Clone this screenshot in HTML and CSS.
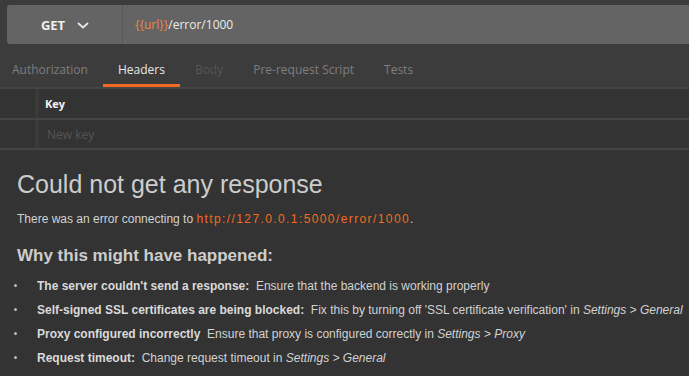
FILE: index.html
```html
<!DOCTYPE html>
<html lang="en">
<head>
    <meta charset="UTF-8">
    <meta name="viewport" content="width=device-width, initial-scale=1.0">
    <title>Could not get any response</title>
    <link rel="stylesheet" href="styles.css">
</head>
<body>
    <section class="request-section">
        <div class="request-bar">
            <div class="method">
                <span class="method-name">GET</span>
                <svg class="chevron" width="12" height="7" viewBox="0 0 12 7">
                    <polyline points="1,1 6,5.5 11,1" fill="none" stroke="#e6e6e6" stroke-width="1.8"/>
                </svg>
            </div>
            <div class="url"><span class="var">{{url}}</span>/error/1000</div>
        </div>

        <nav class="tabs">
            <span class="tab">Authorization</span>
            <span class="tab active">Headers</span>
            <span class="tab disabled">Body</span>
            <span class="tab">Pre-request Script</span>
            <span class="tab">Tests</span>
        </nav>
    </section>

    <section class="headers-table">
        <div class="row">
            <div class="cell-check"></div>
            <div class="cell-key head">Key</div>
        </div>
        <div class="row">
            <div class="cell-check"></div>
            <div class="cell-key placeholder">New key</div>
        </div>
    </section>

    <section class="response">
        <h1 class="error-title">Could not get any response</h1>
        <p class="error-text">There was an error connecting to <a href="#" class="error-link">http://127.0.0.1:5000/error/1000</a>.</p>

        <h2 class="why-title">Why this might have happened:</h2>
        <ul class="reasons">
            <li><strong>The server couldn't send a response:</strong>&nbsp; Ensure that the backend is working properly</li>
            <li><strong>Self-signed SSL certificates are being blocked:</strong>&nbsp; Fix this by turning off 'SSL certificate verification' in <em>Settings &gt; General</em></li>
            <li><strong>Proxy configured incorrectly</strong>&nbsp; Ensure that proxy is configured correctly in <em>Settings &gt; Proxy</em></li>
            <li><strong>Request timeout:</strong>&nbsp; Change request timeout in <em>Settings &gt; General</em></li>
        </ul>
    </section>
</body>
</html>
```

FILE: styles.css
```css
body, html {
    margin: 0;
    padding: 0;
    background: #333333;
    font-family: "Liberation Sans", Arial, sans-serif;
    height: 100%;
    overflow: hidden;
}

.request-section {
    background: #3c3c3c;
    padding-top: 5px;
    border-bottom: 2px solid #454545;
}

.request-bar {
    display: flex;
    height: 39px;
    margin-left: 7px;
    background: #646464;
    border-radius: 3px 0 0 3px;
    font-family: "Open Sans", sans-serif;
}

.method {
    width: 115px;
    display: flex;
    align-items: center;
    justify-content: center;
    gap: 12px;
    border-right: 1px solid #585858;
}

.method-name {
    font-size: 13px;
    font-weight: bold;
    color: #f0f0f0;
    padding-left: 1px;
}

.chevron {
    margin-top: 1px;
}

.url {
    display: flex;
    align-items: center;
    padding-left: 12px;
    font-size: 12px;
    color: #ececec;
}

.var {
    color: #f0883a;
}

.tabs {
    display: flex;
    font-family: "Open Sans", sans-serif;
}

.tab {
    height: 43px;
    box-sizing: border-box;
    padding: 17px 15px 0;
    line-height: 17px;
    font-size: 12px;
    color: #7e7e7e;
    border-bottom: 3px solid transparent;
}

.tab:first-child {
    padding-left: 12px;
}

.tab.active {
    color: #e8e8e8;
    border-bottom-color: #f26b21;
}

.tab.disabled {
    color: #555555;
}

.headers-table {
    font-family: "Open Sans", sans-serif;
}

.row {
    display: flex;
    height: 29px;
    border-bottom: 2px solid #454545;
}

.row + .row {
    height: 28px;
}

.cell-check {
    width: 35px;
    border-right: 4px solid #3a3a3a;
}

.cell-key {
    display: flex;
    align-items: center;
    padding-left: 6px;
}

.head {
    font-size: 11px;
    font-weight: bold;
    color: #f2f2f2;
}

.placeholder {
    font-size: 12px;
    color: #555555;
    padding-left: 8px;
}

.response {
    padding: 20px 0 0 17px;
    color: #d2d2d2;
}

.error-title {
    margin: 0;
    font-size: 25px;
    line-height: 28px;
    font-weight: normal;
    color: #cccccc;
}

.error-text {
    margin: 13px 0 0;
    font-size: 12px;
    line-height: 16px;
}

.error-link {
    color: #f26b21;
    text-decoration: none;
    letter-spacing: 1.4px;
}

.why-title {
    margin: 19px 0 0;
    font-size: 17px;
    line-height: 20px;
    font-weight: bold;
    color: #cdcdcd;
}

.reasons {
    list-style: none;
    margin: 8px 0 0 -3px;
    padding: 0;
    font-size: 12px;
    line-height: 24px;
    white-space: nowrap;
}

.reasons li::before {
    content: "";
    display: inline-block;
    width: 3px;
    height: 3px;
    border-radius: 50%;
    background: #bdbdbd;
    margin: 0 20px 2px 0;
    vertical-align: middle;
}

.reasons strong {
    color: #dadada;
}
```
